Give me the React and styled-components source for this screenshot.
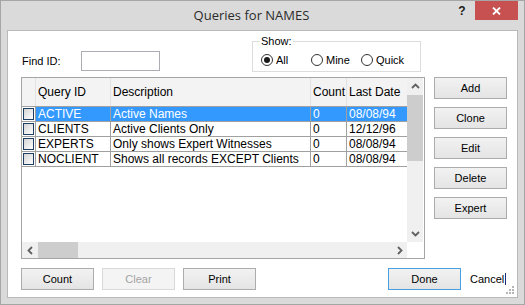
import React from 'react';
import styled, { createGlobalStyle } from 'styled-components';

const GlobalStyle = createGlobalStyle`
  html, body {
    margin: 0;
    padding: 0;
    background: #ffffff;
  }
  body {
    font-family: "Liberation Sans", Arial, sans-serif;
    font-size: 12px;
    color: #000000;
  }
  * {
    box-sizing: border-box;
  }
`;

const queries = [
  { id: 'ACTIVE', description: 'Active Names', count: 0, lastDate: '08/08/94', selected: true },
  { id: 'CLIENTS', description: 'Active Clients Only', count: 0, lastDate: '12/12/96' },
  { id: 'EXPERTS', description: 'Only shows Expert Witnesses', count: 0, lastDate: '08/08/94' },
  { id: 'NOCLIENT', description: 'Shows all records EXCEPT Clients', count: 0, lastDate: '08/08/94' },
];

const columns = '14px 75px 200px 36px 60px';

const Chevron = ({ dir }) => {
  const points = {
    up: '1,5 4.5,1.5 8,5',
    down: '1,2 4.5,5.5 8,2',
    left: '5,1 1.5,4.5 5,8',
    right: '2,1 5.5,4.5 2,8',
  }[dir];
  const size = dir === 'up' || dir === 'down' ? { width: 9, height: 7 } : { width: 7, height: 9 };
  return (
    <svg {...size} viewBox={`0 0 ${size.width} ${size.height}`}>
      <polyline points={points} fill="none" stroke="#606060" strokeWidth="1.8" />
    </svg>
  );
};

const App = () => {
  return (
    <>
      <GlobalStyle />
      <Window>
        <TitleBar>
          <Title>Queries for NAMES</Title>
          <HelpButton>?</HelpButton>
          <CloseButton>
            <svg width="9" height="8" viewBox="0 0 9 8">
              <path d="M1 0.5 L8 7.5 M8 0.5 L1 7.5" stroke="#ffffff" strokeWidth="1.8" />
            </svg>
          </CloseButton>
        </TitleBar>

        <Client>
          <TopRow>
            <FindField>
              <FieldLabel>Find ID:</FieldLabel>
              <TextInput />
            </FindField>
            <GroupBox>
              <Legend>Show:</Legend>
              <RadioItem>
                <RadioCircle checked />
                All
              </RadioItem>
              <RadioItem>
                <RadioCircle />
                Mine
              </RadioItem>
              <RadioItem>
                <RadioCircle />
                Quick
              </RadioItem>
            </GroupBox>
          </TopRow>

          <MiddleRow>
            <Grid>
              <GridBody>
                <HeaderRow>
                  <HeaderCell />
                  <HeaderCell>Query ID</HeaderCell>
                  <HeaderCell>Description</HeaderCell>
                  <HeaderCell>Count</HeaderCell>
                  <HeaderCell last>Last Date</HeaderCell>
                </HeaderRow>
                {queries.map((q) => (
                  <Row key={q.id}>
                    <CheckCell>
                      <CheckBox />
                    </CheckCell>
                    <Cell selected={q.selected}>{q.id}</Cell>
                    <Cell selected={q.selected}>{q.description}</Cell>
                    <Cell selected={q.selected}>{q.count}</Cell>
                    <Cell selected={q.selected} last>{q.lastDate}</Cell>
                  </Row>
                ))}
              </GridBody>
              <VScroll>
                <ScrollArrow vertical>
                  <Chevron dir="up" />
                </ScrollArrow>
                <VThumb />
                <ScrollSpacer />
                <ScrollArrow vertical>
                  <Chevron dir="down" />
                </ScrollArrow>
              </VScroll>
              <HScroll>
                <ScrollArrow>
                  <Chevron dir="left" />
                </ScrollArrow>
                <HThumb />
                <ScrollSpacer />
                <ScrollArrow>
                  <Chevron dir="right" />
                </ScrollArrow>
              </HScroll>
              <ScrollCorner />
            </Grid>

            <SideButtons>
              <Button>Add</Button>
              <Button>Clone</Button>
              <Button>Edit</Button>
              <Button>Delete</Button>
              <Button>Expert</Button>
            </SideButtons>
          </MiddleRow>

          <BottomRow>
            <Button>Count</Button>
            <Button disabled>Clear</Button>
            <Button>Print</Button>
            <Button focused>Done</Button>
            <CancelLink>
              Cancel
              <Caret />
            </CancelLink>
          </BottomRow>

          <ResizeGrip width="9" height="9" viewBox="0 0 9 9">
            {[
              [6, 0],
              [3, 3],
              [6, 3],
              [0, 6],
              [3, 6],
              [6, 6],
            ].map(([x, y]) => (
              <rect key={`${x}-${y}`} x={x} y={y} width="2" height="2" fill="#b6b6b6" />
            ))}
          </ResizeGrip>
        </Client>
      </Window>
    </>
  );
};

const Window = styled.div`
  width: 525px;
  height: 305px;
  border: 1px solid #a6a6a6;
  background: #dadada;
  padding: 0 6px 6px;
  display: flex;
  flex-direction: column;
`;

const TitleBar = styled.div`
  height: 29px;
  display: flex;
  align-items: flex-start;
`;

const Title = styled.div`
  flex: 1;
  padding-left: 47px;
  text-align: center;
  line-height: 29px;
  font-family: "Open Sans", "Noto Sans", sans-serif;
  font-size: 13px;
  color: #2b2b2b;
`;

const HelpButton = styled.div`
  width: 26px;
  height: 21px;
  line-height: 21px;
  text-align: center;
  font-weight: bold;
  font-size: 12px;
  color: #1a1a1a;
`;

const CloseButton = styled.div`
  width: 43px;
  height: 19px;
  background: #c75050;
  display: flex;
  align-items: center;
  justify-content: center;
`;

const Client = styled.div`
  flex: 1;
  position: relative;
  background: #ffffff;
  border: 1px solid #b9b9b9;
  padding: 0 10px 7px 13px;
  display: flex;
  flex-direction: column;
`;

const TopRow = styled.div`
  height: 46px;
  display: flex;
  align-items: flex-start;
`;

const FindField = styled.div`
  margin-top: 20px;
  display: flex;
  align-items: center;
`;

const FieldLabel = styled.label`
  width: 60px;
  padding-left: 1px;
  font-size: 11px;
`;

const TextInput = styled.input`
  width: 79px;
  height: 20px;
  border: 1px solid #abadb3;
  padding: 0 3px;
  outline: none;
  background: #ffffff;
`;

const GroupBox = styled.div`
  position: relative;
  margin: 10px 0 0 92px;
  width: 169px;
  height: 31px;
  border: 1px solid #dcdcdc;
  padding: 7px 0 0 8px;
  display: flex;
  align-items: center;
`;

const Legend = styled.span`
  position: absolute;
  top: -8px;
  left: 7px;
  padding: 0 1px;
  background: #ffffff;
  line-height: 14px;
  font-size: 11px;
`;

const RadioItem = styled.label`
  width: 50px;
  display: flex;
  align-items: center;
  gap: 3px;
  font-size: 11px;
`;

const RadioCircle = styled.span`
  position: relative;
  width: 12px;
  height: 12px;
  border: 1px solid #333333;
  border-radius: 50%;
  background: #ffffff;
  flex-shrink: 0;

  &::after {
    content: '';
    display: ${(p) => (p.checked ? 'block' : 'none')};
    position: absolute;
    top: 2px;
    left: 2px;
    width: 6px;
    height: 6px;
    border-radius: 50%;
    background: #1a1a1a;
  }
`;

const MiddleRow = styled.div`
  height: 182px;
  display: flex;
  gap: 9px;
`;

const Grid = styled.div`
  width: 404px;
  border: 1px solid #a5a5a5;
  display: grid;
  grid-template-columns: 385px 17px;
  grid-template-rows: 164px 16px;
`;

const GridBody = styled.div`
  background: #ffffff;
  overflow: hidden;
`;

const HeaderRow = styled.div`
  display: grid;
  grid-template-columns: ${columns};
  height: 29px;
  background: #f3f3f3;
  border-bottom: 1px solid #a0a0a0;
`;

const HeaderCell = styled.div`
  display: flex;
  align-items: center;
  padding-left: 2px;
  border-right: ${(p) => (p.last ? 'none' : '1px solid #e2e2e2')};
  white-space: nowrap;
`;

const Row = styled.div`
  display: grid;
  grid-template-columns: ${columns};
  height: 15px;
  border-bottom: 1px solid #a0a0a0;
`;

const Cell = styled.div`
  padding-left: 2px;
  line-height: 14px;
  white-space: nowrap;
  overflow: hidden;
  border-right: ${(p) => (p.last ? 'none' : '1px solid #a0a0a0')};
  background: ${(p) => (p.selected ? '#3399ff' : '#ffffff')};
  color: ${(p) => (p.selected ? '#ffffff' : '#000000')};
`;

const CheckCell = styled.div`
  border-right: 1px solid #a0a0a0;
  padding: 1px 0 0 1px;
`;

const CheckBox = styled.div`
  width: 11px;
  height: 12px;
  border: 1px solid #1f3e63;
  background: linear-gradient(135deg, #d4d4d4, #ffffff);
`;

const VScroll = styled.div`
  background: #f0f0f0;
  display: flex;
  flex-direction: column;
  border-right: 1px solid #ffffff;
`;

const HScroll = styled.div`
  background: #f0f0f0;
  display: flex;
`;

const ScrollArrow = styled.div`
  flex-shrink: 0;
  width: ${(p) => (p.vertical ? 'auto' : '16px')};
  height: ${(p) => (p.vertical ? '17px' : 'auto')};
  display: flex;
  align-items: center;
  justify-content: center;
`;

const ScrollSpacer = styled.div`
  flex: 1;
`;

const VThumb = styled.div`
  height: 66px;
  background: #cdcdcd;
`;

const HThumb = styled.div`
  width: 40px;
  background: #cdcdcd;
`;

const ScrollCorner = styled.div`
  background: #ffffff;
`;

const SideButtons = styled.div`
  width: 73px;
  display: flex;
  flex-direction: column;
  gap: 8px;
`;

const Button = styled.button`
  width: 73px;
  height: 22px;
  flex-shrink: 0;
  padding: 0;
  border-radius: 0;
  font-family: "Liberation Sans", Arial, sans-serif;
  font-size: 11px;
  color: ${(p) => (p.disabled ? '#a3a3a3' : '#000000')};
  border: 1px solid
    ${(p) => (p.focused ? '#4a9fe0' : p.disabled ? '#d9d9d9' : '#acacac')};
  background: ${(p) =>
    p.disabled ? '#f4f4f4' : 'linear-gradient(#f2f2f2, #e4e4e4)'};
  margin-left: ${(p) => (p.focused ? 'auto' : '0')};
`;

const BottomRow = styled.div`
  margin-top: 9px;
  height: 22px;
  display: flex;
  align-items: center;
  gap: 8px;
`;

const CancelLink = styled.span`
  width: 37px;
  margin-left: 1px;
  display: flex;
  align-items: center;
  font-size: 11px;
`;

const Caret = styled.span`
  display: inline-block;
  width: 1px;
  height: 12px;
  margin-left: 1px;
  background: #1b2f7a;
`;

const ResizeGrip = styled.svg`
  position: absolute;
  right: 2px;
  bottom: 2px;
`;

export default App;
